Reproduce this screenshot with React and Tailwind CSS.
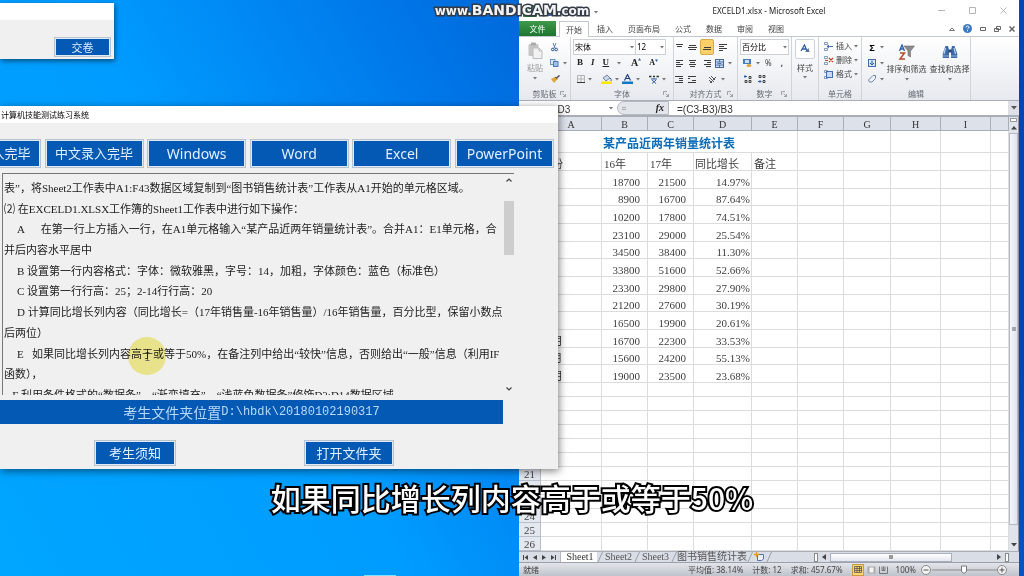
import React from "react";

const SANS = "font-['Noto_Sans','Noto_Sans_CJK_SC',sans-serif]";
const SERIF = "font-['Liberation_Serif','Noto_Sans_CJK_SC',serif]";

const ribbonTabs = ["插入", "页面布局", "公式", "数据", "审阅", "视图"];

const columns = ["A", "B", "C", "D", "E", "F", "G", "H", "I", ""];

const sales = [
  ["1月", "18700", "21500", "14.97%"],
  ["2月", "8900", "16700", "87.64%"],
  ["3月", "10200", "17800", "74.51%"],
  ["4月", "23100", "29000", "25.54%"],
  ["5月", "34500", "38400", "11.30%"],
  ["6月", "33800", "51600", "52.66%"],
  ["7月", "23300", "29800", "27.90%"],
  ["8月", "21200", "27600", "30.19%"],
  ["9月", "16500", "19900", "20.61%"],
  ["10月", "16700", "22300", "33.53%"],
  ["11月", "15600", "24200", "55.13%"],
  ["12月", "19000", "23500", "23.68%"],
];

const emptyRows = [15, 16, 17, 18, 19, 20, 21, 22, 23, 24, 25, 26];

const examLines = [
  { text: "表”，将Sheet2工作表中A1:F43数据区域复制到“图书销售统计表”工作表从A1开始的单元格区域。" },
  { text: "⑵ 在EXCELD1.XLSX工作簿的Sheet1工作表中进行如下操作：" },
  { text: "A      在第一行上方插入一行，在A1单元格输入“某产品近两年销量统计表”。合并A1：E1单元格，合", indent: true },
  { text: "并后内容水平居中" },
  { text: "B 设置第一行内容格式：字体：微软雅黑，字号：14，加粗，字体颜色：蓝色（标准色）", indent: true },
  { text: "C 设置第一行行高：25；2-14行行高：20", indent: true },
  { text: "D 计算同比增长列内容（同比增长=（17年销售量-16年销售量）/16年销售量，百分比型，保留小数点", indent: true },
  { text: "后两位）" },
  { text: "E   如果同比增长列内容高于或等于50%，在备注列中给出“较快”信息，否则给出“一般”信息（利用IF", indent: true },
  { text: "函数），" },
  { text: "   F 利用条件格式的“数据条”、“渐变填充”、“浅蓝色数据条”修饰D3:D14数据区域" },
];

/* ---------- small shared pieces ---------- */

function Caret() {
  return (
    <svg width="4" height="3" viewBox="0 0 4 3" className="shrink-0">
      <path d="M0 0h4L2 2.5z" fill="#777" />
    </svg>
  );
}

function Launcher() {
  return (
    <svg width="6" height="6" viewBox="0 0 6 6">
      <path d="M.5 4V.5H4M2.5 2.5l3 3M5.500 3v2.500H3" fill="none" stroke="#8a8f98" strokeWidth=".8" />
    </svg>
  );
}

function ToolButton({ label, children, className = "" }) {
  return (
    <button type="button" aria-label={label} className={`flex h-4 items-center gap-1 ${className}`}>
      {children}
    </button>
  );
}

function Lines({ rows, y = 1, gap = 2 }) {
  return (
    <svg width="9" height="9" viewBox="0 0 9 9">
      {rows.map(([x, w], i) => (
        <rect key={i} x={x} y={y + i * gap} width={w} height="1" fill="#3c3c3c" />
      ))}
    </svg>
  );
}

function Group({ label, launcher, width, children }) {
  return (
    <section className={`flex shrink-0 flex-col border-r border-[#d0d4da] pt-[2px] ${width}`}>
      <div className="flex-1">{children}</div>
      <div className="relative flex h-[13px] items-center justify-center text-[8px] leading-none text-[#666b73]">
        {label}
        {launcher && (
          <button type="button" aria-label={`${label}设置`} className="absolute right-1 top-1">
            <Launcher />
          </button>
        )}
      </div>
    </section>
  );
}

/* ---------- icons ---------- */

const PasteIcon = () => (
  <svg width="15" height="17" viewBox="0 0 15 17">
    <rect x=".5" y="2" width="10" height="12" rx="1" fill="#c6c6c6" />
    <rect x="3" y=".5" width="5" height="3" rx="1" fill="#a9a9a9" />
    <path d="M5 6h6l3 3v7.500H5z" fill="#f2f2f2" stroke="#bdbdbd" />
    <path d="M11 6v3h3" fill="none" stroke="#bdbdbd" />
  </svg>
);

const CutIcon = () => (
  <svg width="7" height="9" viewBox="0 0 7 9">
    <path d="M2 0l2 5M5 0L3 5" stroke="#5b7fae" fill="none" />
    <circle cx="1.800" cy="6.500" r="1.300" fill="none" stroke="#264f8f" />
    <circle cx="5.200" cy="6.500" r="1.300" fill="none" stroke="#264f8f" />
  </svg>
);

const CopyIcon = () => (
  <svg width="9" height="8" viewBox="0 0 9 8">
    <rect x=".5" y=".5" width="4.500" height="5" fill="#dbe8f7" stroke="#6a93c6" />
    <rect x="3.500" y="2.500" width="4.500" height="5" fill="#9cc0ea" stroke="#4b7ab5" />
  </svg>
);

const BrushIcon = () => (
  <svg width="10" height="8" viewBox="0 0 10 8">
    <path d="M9.500.5L6 3.500" stroke="#4d4d63" strokeWidth="1.500" />
    <path d="M1 4l4-2 2.500 2L4 8z" fill="#dda63a" />
    <path d="M5 2l2.500 2" stroke="#705020" />
  </svg>
);

const SortIcon = () => (
  <svg width="17" height="16" viewBox="0 0 17 16">
    <path d="M6 2h10.500l-4 5v6l-2.500-1.500V7z" fill="#8b8b8b" stroke="#6c6c6c" strokeWidth=".6" />
    <path d="M1.500 7L4 1l2.500 6M2.500 5h3" fill="none" stroke="#2f5fa8" strokeWidth="1.400" />
    <path d="M2 9h4.500L2 15h5" fill="none" stroke="#b8492f" strokeWidth="1.500" />
  </svg>
);

const BinocularsIcon = () => (
  <svg width="16" height="16" viewBox="0 0 16 16">
    <path d="M3.500 2h2.500l1 4v8H.8V9.500z" fill="#3e68a6" />
    <path d="M12.500 2H10L9 6v8h6.200V9.500z" fill="#3e68a6" />
    <rect x="6.500" y="5.500" width="3" height="3" fill="#24477f" />
    <path d="M3.500 4L2 10M12 4l1.500 6" stroke="#b6cff0" strokeWidth="1.200" />
    <path d="M.8 12h6.200M9 12h6.200" stroke="#8fb0dc" />
  </svg>
);

const CellIcon = ({ kind }) => (
  <svg width="10" height="9" viewBox="0 0 10 9">
    <path d="M.5.5h3v2h-3zM.5 6.500h3v2h-3z" fill="#fff" stroke="#69809f" strokeWidth=".8" />
    {kind === "insert" && <path d="M3 4.500h6M5 3L3 4.500 5 6" stroke="#3f6db0" fill="none" />}
    {kind === "delete" && <path d="M5 2l4 4M9 2L5 6M1 4.500h3" stroke="#c3402d" fill="none" strokeWidth="1.200" />}
    {kind === "format" && <rect x="2.500" y="1.500" width="6" height="6" fill="#c6daf2" stroke="#3f6db0" />}
  </svg>
);

/* ---------- Excel window ---------- */

function TitleBar() {
  return (
    <header className="relative flex h-[21px] items-center justify-center">
      <div className="absolute left-1 flex items-center gap-2">
        <svg width="14" height="12" viewBox="0 0 14 12">
          <rect width="14" height="12" rx="1" fill="#2b7a3d" />
          <path d="M4 3l5 6M9 3L4 9" stroke="#fff" strokeWidth="1.500" />
        </svg>
        <svg width="10" height="10" viewBox="0 0 10 10">
          <rect width="10" height="10" fill="#4d67b5" />
          <rect x="2" width="6" height="4" fill="#fff" />
        </svg>
      </div>
      <div className="absolute left-[75px] top-[11px]">
        <Caret />
      </div>
      <h1 className="text-[8px] text-[#222]">EXCELD1.xlsx - Microsoft Excel</h1>
      <div className="absolute right-3 flex items-center gap-6 text-[#b5b5b5]">
        <button type="button" aria-label="最小化">
          <svg width="7" height="7" viewBox="0 0 7 7"><path d="M0 3.500h7" stroke="currentColor" /></svg>
        </button>
        <button type="button" aria-label="最大化">
          <svg width="7" height="7" viewBox="0 0 7 7"><path d="M.5.5h6v6h-6z" fill="none" stroke="currentColor" /></svg>
        </button>
        <button type="button" aria-label="关闭">
          <svg width="7" height="7" viewBox="0 0 7 7"><path d="M.5.5l6 6M6.500.5l-6 6" stroke="currentColor" /></svg>
        </button>
      </div>
    </header>
  );
}

function RibbonTabs() {
  return (
    <nav className="flex h-4 items-stretch border-b border-[#c3c8cf] text-[8px] text-[#444]">
      <button type="button" className="w-[37px] bg-linear-to-b from-[#3f9a4b] to-[#1c7430] text-white">文件</button>
      <button type="button" className="-mb-px ml-[3px] w-[30px] border border-b-0 border-[#c3c8cf] bg-white">开始</button>
      <div className="flex gap-[15px] pl-2">
        {ribbonTabs.map((t) => (
          <button type="button" key={t}>{t}</button>
        ))}
      </div>
      <div className="ml-auto flex items-center gap-[8px] pr-1">
        <svg width="6" height="4" viewBox="0 0 6 4"><path d="M.5 3.500L3 1l2.500 2.500z" fill="none" stroke="#777" /></svg>
        <svg width="9" height="9" viewBox="0 0 9 9">
          <circle cx="4.500" cy="4.500" r="4.500" fill="#3b78c2" />
          <path d="M3 3.500q0-1.500 1.500-1.500T6 3.300Q6 4.200 4.500 4.800M4.500 6v1.200" fill="none" stroke="#fff" />
        </svg>
        <svg width="6" height="4" viewBox="0 0 6 4"><path d="M.5.5h5v3h-5z" fill="none" stroke="#666" /></svg>
        <svg width="7" height="6" viewBox="0 0 7 6"><path d="M2.500.5h4v3h-4zM.5 2.500h4v3h-4z" fill="none" stroke="#666" /></svg>
        <svg width="6" height="6" viewBox="0 0 6 6"><path d="M.5.5l5 5M5.500.5l-5 5" stroke="#666" strokeWidth="1.500" /></svg>
      </div>
    </nav>
  );
}

function Ribbon() {
  return (
    <div className="flex h-16 border-b border-[#a9aeb6] bg-linear-to-b from-white to-[#e6e9ee] text-[8px] text-[#444]">
      <Group label="剪贴板" launcher width="w-[52px]">
        <div className="flex pl-[7px]">
          <button type="button" className="flex w-[18px] flex-col items-center gap-1 pt-[3px] text-[#9a9a9a]">
            <PasteIcon />
            <span className="leading-[10px]">粘贴</span>
            <Caret />
          </button>
          <div className="ml-[6px] flex flex-col">
            <ToolButton label="剪切" className="pl-px"><CutIcon /></ToolButton>
            <ToolButton label="复制"><CopyIcon /><Caret /></ToolButton>
            <ToolButton label="格式刷"><BrushIcon /></ToolButton>
          </div>
        </div>
      </Group>

      <Group label="字体" launcher width="w-[103px]">
        <div className="flex h-4 px-[2px] text-[8px] text-black">
          <button type="button" className="flex w-[63px] items-center justify-between border border-[#cdd1d7] bg-white px-[1px]">
            宋体<Caret />
          </button>
          <button type="button" className="flex w-[30px] items-center justify-between border border-l-0 border-[#cdd1d7] bg-white px-[1px]">
            12<Caret />
          </button>
        </div>
        <div className="flex h-4 items-center gap-[8px] pl-[6px] font-['Liberation_Serif',serif] text-[9px] font-bold text-[#222]">
          <button type="button">B</button>
          <button type="button" className="italic">I</button>
          <button type="button" className="underline">U</button>
          <Caret />
          <button type="button" className="ml-[2px] flex text-[10px] leading-none">
            A<svg width="3" height="3" viewBox="0 0 3 3"><path d="M0 2.500L1.500 0 3 2.500z" fill="#2e5ea8" /></svg>
          </button>
          <button type="button" className="flex text-[8px] leading-none">
            A<svg width="3" height="3" viewBox="0 0 3 3"><path d="M0 .5h3L1.500 3z" fill="#2e5ea8" /></svg>
          </button>
        </div>
        <div className="flex h-4 items-center gap-[3px] pl-[6px]">
          <ToolButton label="边框">
            <svg width="8" height="8" viewBox="0 0 8 8"><path d="M.5.5h7v7M.5.5v7M4 .5v7M.5 4h7" fill="none" stroke="#b5b5b5" /><path d="M0 7.500h8" stroke="#333" /></svg>
          </ToolButton>
          <Caret />
          <ToolButton label="填充颜色" className="ml-[6px]">
            <svg width="11" height="10" viewBox="0 0 11 10"><path d="M2 4l4-3 3 3-4 3z" fill="#c7d9ef" stroke="#5c6f8d" strokeWidth=".8" /><path d="M9 4q2 1 1 3" fill="none" stroke="#2e5ea8" /><rect y="7.500" width="11" height="2.500" fill="#ffe600" /></svg>
          </ToolButton>
          <Caret />
          <ToolButton label="字体颜色">
            <svg width="11" height="10" viewBox="0 0 11 10"><path d="M2.500 6.500L5.500.5l3 6M3.500 4.500h4" fill="none" stroke="#27457c" strokeWidth="1.200" /><rect y="7.500" width="11" height="2.500" fill="#0b78c9" /></svg>
          </ToolButton>
          <Caret />
          <ToolButton label="拼音" className="ml-[6px]">
            <svg width="10" height="9" viewBox="0 0 10 9"><path d="M0 1.500h2.500M4 1.500h2M7.500 1.500H10" stroke="#333" strokeWidth="1.500" /><path d="M2 4h6M5 3v1M3 5l4 3.500M7 5L3 8.500" fill="none" stroke="#2e5ea8" /></svg>
          </ToolButton>
          <Caret />
        </div>
      </Group>

      <Group label="对齐方式" launcher width="w-[64px]">
        <div className="grid grid-cols-[10px_16px_14px_18px] justify-items-center">
          <ToolButton label="顶端对齐"><Lines rows={[[1, 7], [2, 5]]} /></ToolButton>
          <ToolButton label="垂直居中"><Lines rows={[[1, 7], [0, 9], [1, 7]]} y={2} /></ToolButton>
          <ToolButton label="底端对齐" className="w-[14px] justify-center rounded-xs border border-[#d6a94c] bg-[#fdd067]"><Lines rows={[[1, 7], [0, 8]]} y={4} /></ToolButton>
          <ToolButton label="自动换行"><Lines rows={[[0, 8], [0, 5], [0, 8], [0, 4]]} /></ToolButton>
          <ToolButton label="左对齐"><Lines rows={[[1, 7], [1, 4], [1, 7], [1, 5]]} /></ToolButton>
          <ToolButton label="居中"><Lines rows={[[1, 7], [2, 5], [1, 7], [2, 5]]} /></ToolButton>
          <ToolButton label="右对齐"><Lines rows={[[1, 7], [4, 4], [1, 7], [3, 5]]} /></ToolButton>
          <ToolButton label="合并后居中">
            <svg width="9" height="9" viewBox="0 0 9 9"><rect x=".5" y=".5" width="8" height="8" fill="#c9dcf3" stroke="#4b6a9c" /><path d="M.5 3h8M.5 6h8M4.500.5v2.500M4.500 6v3M2.500 4.500h4" stroke="#3a5c95" strokeWidth=".8" /></svg>
            <Caret />
          </ToolButton>
          <ToolButton label="减少缩进"><Lines rows={[[0, 8], [4, 4], [4, 4], [0, 8]]} /></ToolButton>
          <ToolButton label="增加缩进"><Lines rows={[[0, 8], [0, 2], [4, 4], [0, 8]]} /></ToolButton>
          <ToolButton label="方向" className="col-span-2">
            <svg width="9" height="9" viewBox="0 0 9 9"><path d="M1 2l5 5M3 1l4 4M1 5l3 3M8 2L2 8" stroke="#555" /></svg>
            <Caret />
          </ToolButton>
        </div>
      </Group>

      <Group label="数字" launcher width="w-[54px]">
        <div className="flex h-4 px-[2px]">
          <button type="button" className="flex flex-1 items-center justify-between border border-[#cdd1d7] bg-white px-[1px] text-black">
            百分比<Caret />
          </button>
        </div>
        <div className="flex h-4 items-center gap-[4px] pl-[5px]">
          <svg width="9" height="8" viewBox="0 0 9 8"><rect width="8" height="5" fill="#4a78b8" /><rect x="2" y="1" width="4" height="3" fill="#cfe0f5" /><ellipse cx="6" cy="6.500" rx="2.500" ry="1.500" fill="#e0a63a" /></svg>
          <Caret />
          <button type="button" className="pl-[1px]">%</button>
          <button type="button" className="pl-[5px] font-bold">,</button>
        </div>
        <div className="flex h-4 items-center gap-[6px] pl-[6px]">
          <svg width="8" height="8" viewBox="0 0 8 8"><path d="M0 1.500h3M1.500 0L0 1.500 1.500 3" stroke="#2e66b5" fill="none" /><path d="M5 1.500h2v2H5zM1 5.500h2v2H1zM5 5.500h2v2H5z" fill="none" stroke="#444" /></svg>
          <svg width="8" height="8" viewBox="0 0 8 8"><path d="M0 6.500h3M1.500 5L3 6.500 1.500 8" stroke="#2e66b5" fill="none" /><path d="M1 .5h2v2H1zM5 .5h2v2H5zM5 5.500h2v2H5z" fill="none" stroke="#444" /></svg>
        </div>
      </Group>

      <Group label="" width="w-[27px]">
        <button type="button" className="mx-auto flex flex-col items-center gap-[3px]">
          <span className="flex h-5 w-5 items-center justify-center rounded-xs border border-[#cfd3d9] bg-white">
            <svg width="10" height="10" viewBox="0 0 10 10"><path d="M1 7l3.500-6L7 7M2.500 5h3.500" stroke="#2e5ea8" strokeWidth="1.300" fill="none" /><path d="M5 8l3.500-4L9.500 8z" fill="#58739b" /></svg>
          </span>
          <span className="mt-[1px] leading-[10px]">样式</span>
          <Caret />
        </button>
      </Group>

      <Group label="单元格" width="w-[43px]">
        <div className="flex flex-col pl-[5px]">
          {[["insert", "插入"], ["delete", "删除"], ["format", "格式"]].map(([k, t]) => (
            <button type="button" key={k} className="flex h-[14px] items-center gap-[2px]">
              <CellIcon kind={k} />{t}<Caret />
            </button>
          ))}
        </div>
      </Group>

      <Group label="编辑" width="w-[109px]">
        <div className="flex pl-[6px]">
          <div className="flex flex-col">
            <ToolButton label="求和"><span className="w-[8px] text-[9px] font-bold leading-none text-black">Σ</span><Caret /></ToolButton>
            <ToolButton label="填充">
              <svg width="8" height="8" viewBox="0 0 8 8"><rect x=".5" y=".5" width="7" height="7" fill="#dce9f8" stroke="#3f6db0" /><path d="M4 1.500v4M2 4l2 2 2-2" stroke="#2258a8" fill="none" /></svg>
              <Caret />
            </ToolButton>
            <ToolButton label="清除">
              <svg width="8" height="8" viewBox="0 0 8 8"><path d="M.5 5L5 .5h2.500v3L4 7H1.500z" fill="#eef3fa" stroke="#7286a6" /></svg>
              <Caret />
            </ToolButton>
          </div>
          <button type="button" className="ml-[2px] flex w-[41px] flex-col items-center gap-1 whitespace-nowrap pt-[5px]">
            <SortIcon /><span className="leading-[10px]">排序和筛选</span><Caret />
          </button>
          <button type="button" className="ml-[2px] flex w-[41px] flex-col items-center gap-1 whitespace-nowrap pt-[5px]">
            <BinocularsIcon /><span className="leading-[10px]">查找和选择</span><Caret />
          </button>
        </div>
      </Group>
    </div>
  );
}

function FormulaBar() {
  return (
    <div className="flex h-4 items-stretch border-b-2 border-[#a9adb5] bg-white text-[10px]">
      <label className="flex w-[94px] items-center">
        <input aria-label="名称框" defaultValue="D3" className="h-full w-0 flex-1 bg-transparent pt-[3px] text-center font-['Liberation_Sans',sans-serif] text-[10px] leading-none text-[#333] outline-none" />
        <Caret />
      </label>
      <div className="ml-1 flex w-[52px] items-center justify-between rounded-l-full border border-[#b5bac2] bg-[#e2e5ea] px-1">
        <span className="h-[3px] w-1 border-y border-[#aaa]" />
        <span className="font-['Liberation_Serif',serif] text-[10px] font-bold italic leading-none text-[#222]">fx</span>
      </div>
      <input aria-label="编辑栏" defaultValue="=(C3-B3)/B3" className="min-w-0 flex-1 bg-transparent pl-2 pt-[3px] font-['Liberation_Sans',sans-serif] text-[10px] leading-none text-[#333] outline-none" />
      <button type="button" aria-label="展开编辑栏" className="flex w-[11px] items-center justify-center bg-[#dde0e6]">
        <svg width="6" height="4" viewBox="0 0 6 4"><path d="M0 0l3 3.500L6 0z" fill="#555" /></svg>
      </button>
    </div>
  );
}

const cell = "overflow-hidden whitespace-nowrap border-b border-r border-[#dcdcdc] p-0 align-bottom";

function RowHead({ n }) {
  return (
    <th scope="row" className="border-b border-r border-[#b9bec8] bg-[#e3e7ee] p-0 text-center align-bottom text-[11px] font-normal text-[#444]">
      {n}
    </th>
  );
}

function Blank({ count }) {
  return Array.from({ length: count }, (_, i) => <td key={i} className={cell} />);
}

function Sheet() {
  return (
    <div className="flex min-h-0 flex-1">
      <div className="min-w-0 flex-1 overflow-hidden">
        <table className={`w-full table-fixed border-separate border-spacing-0 bg-white text-[11px] leading-none text-[#3d3d3d] ${SERIF}`}>
          <colgroup>
            <col className="w-[22px]" />
            <col className="w-[61px]" />
            <col className="w-[46px]" />
            <col className="w-[46px]" />
            <col className="w-[58px]" />
            <col className="w-[46px]" />
            <col className="w-[46px]" />
            <col className="w-[47px]" />
            <col className="w-[50px]" />
            <col className="w-[50px]" />
            <col />
          </colgroup>
          <thead>
            <tr className="h-[14px]">
              <th className="border-b border-r border-[#a9aeb8] bg-[#dde1ea] p-0" />
              {columns.map((c, i) => (
                <th key={i} scope="col" className="border-b border-r border-[#a9aeb8] bg-[#dde1ea] p-0 text-center align-bottom text-[10px] font-normal text-[#333]">
                  {c}
                </th>
              ))}
            </tr>
          </thead>
          <tbody>
            <tr className="h-[22px]">
              <RowHead n={1} />
              <td colSpan={5} className={`${cell} pb-[2px] text-center text-[12px] font-bold text-[#0b6cb8]`}>某产品近两年销量统计表</td>
              <Blank count={5} />
            </tr>
            <tr className="h-[18px]">
              <RowHead n={2} />
              <td className={cell}>月份</td>
              <td className={`${cell} pl-[2px]`}>16年</td>
              <td className={`${cell} pl-[2px]`}>17年</td>
              <td className={`${cell} pl-[1px]`}>同比增长</td>
              <td className={`${cell} pl-[2px]`}>备注</td>
              <Blank count={5} />
            </tr>
            {sales.map((r, i) => (
              <tr key={r[0]} className={i % 3 === 1 ? "h-[17px]" : "h-[18px]"}>
                <RowHead n={i + 3} />
                <td className={cell}>{r[0]}</td>
                <td className={`${cell} pr-[7px] text-right`}>{r[1]}</td>
                <td className={`${cell} pr-[7px] text-right`}>{r[2]}</td>
                <td className={`${cell} pr-[1px] text-right`}>{r[3]}</td>
                <Blank count={6} />
              </tr>
            ))}
            {emptyRows.map((n) => (
              <tr key={n} className="h-[14px]">
                <RowHead n={n} />
                <Blank count={10} />
              </tr>
            ))}
          </tbody>
        </table>
      </div>
      <div className="flex w-[10px] flex-col border-r border-[#8f96a3] bg-[#dfe3ea]">
        <div className="mx-px mt-px h-1 border border-[#999] bg-white" />
        <div className="flex h-[11px] items-center justify-center">
          <svg width="6" height="4" viewBox="0 0 6 4"><path d="M0 3.500L3 0l3 3.500z" fill="#444" /></svg>
        </div>
        <div className="flex flex-1 items-center justify-center border border-[#b3b9c4] bg-linear-to-r from-[#f4f6fa] to-[#dfe4ed]">
          <span className="h-1 w-1 bg-[#a2a7b0]" />
        </div>
        <div className="flex h-[26px] items-end justify-center pb-1">
          <svg width="6" height="4" viewBox="0 0 6 4"><path d="M0 0l3 3.500L6 0z" fill="#444" /></svg>
        </div>
      </div>
    </div>
  );
}

function Slant() {
  return (
    <svg width="6" height="11" viewBox="0 0 6 11" className="shrink-0">
      <path d="M5.500 0L.5 11" stroke="#9aa0aa" fill="none" />
    </svg>
  );
}

function SheetTabs() {
  return (
    <div className={`flex h-[11px] items-stretch border-t border-[#a9aeb8] bg-[#d9dde6] text-[10px] leading-none text-[#555] ${SERIF}`}>
      <div className="flex w-[42px] items-center justify-around border-r border-[#b0b5be] px-[1px]">
        <svg width="5" height="5" viewBox="0 0 5 5"><path d="M0 0h1v5H0zM5 0v5L1.500 2.500z" fill="#444" /></svg>
        <svg width="4" height="5" viewBox="0 0 4 5"><path d="M4 0v5L0 2.500z" fill="#444" /></svg>
        <svg width="4" height="5" viewBox="0 0 4 5"><path d="M0 0v5l4-2.500z" fill="#444" /></svg>
        <svg width="5" height="5" viewBox="0 0 5 5"><path d="M4 0h1v5H4zM0 0v5l3.500-2.500z" fill="#444" /></svg>
      </div>
      <button type="button" className="w-[36px] bg-white pl-[2px] text-[#333]">Sheet1</button>
      <Slant />
      <button type="button" className="w-[31px]">Sheet2</button>
      <Slant />
      <button type="button" className="w-[31px]">Sheet3</button>
      <Slant />
      <button type="button" className="whitespace-nowrap">图书销售统计表</button>
      <Slant />
      <svg width="11" height="9" viewBox="0 0 11 9" className="mx-px">
        <path d="M3.500 2.500h6v4.500l-2 1.500h-4z" fill="#e9f0fa" stroke="#5675a8" />
        <path d="M2.500 0v5M0 2.500h5" stroke="#e09a28" strokeWidth="1.300" />
      </svg>
      <Slant />
      <div className="ml-auto flex w-[205px] items-center gap-[4px]">
        <span className="h-[9px] w-1 border border-[#888] bg-white" />
        <svg width="4" height="6" viewBox="0 0 4 6"><path d="M4 0v6L0 3z" fill="#444" /></svg>
        <div className="flex h-[9px] w-[122px] items-center justify-center border border-[#a9b0bc] bg-linear-to-b from-white to-[#e2e6ee]">
          <span className="h-1 w-1 bg-[#999]" />
        </div>
        <svg width="4" height="6" viewBox="0 0 4 6" className="ml-auto"><path d="M0 0v6l4-3z" fill="#444" /></svg>
        <span className="mr-[10px] h-[9px] w-1 border border-[#888] bg-white" />
      </div>
    </div>
  );
}

function StatusBar() {
  return (
    <footer className="flex h-[14px] items-center border-t border-[#9ba1ab] bg-linear-to-b from-[#e2e5ea] to-[#bfc4cc] pl-1 text-[8px] leading-none text-[#444]">
      <span>就绪</span>
      <div className="ml-auto flex items-center gap-[9px] pr-[9px]">
        <span>平均值: 38.14%</span>
        <span>计数: 12</span>
        <span>求和: 457.67%</span>
      </div>
      <div className="flex items-center gap-[3px]">
        <button type="button" aria-label="普通" className="flex h-3 w-3 items-center justify-center border border-[#c99a3a] bg-[#fbd775]">
          <svg width="8" height="7" viewBox="0 0 8 7"><path d="M.5.5h7v6h-7zM.5 2.500h7M.5 4.500h7M3 .5v6M5.500.5v6" fill="none" stroke="#555" strokeWidth=".8" /></svg>
        </button>
        <svg width="9" height="8" viewBox="0 0 9 8"><path d="M.5.5h8v7h-8z" fill="#aaa" /><path d="M2.500 1.500h4v5h-4z" fill="#f5f5f5" /></svg>
        <svg width="9" height="8" viewBox="0 0 9 8"><path d="M.5.5v7h8v-7M3 .5v4h3v-4M4.500.5V4" fill="none" stroke="#777" /></svg>
      </div>
      <span className="ml-[8px]">100%</span>
      <div className="ml-[4px] mr-[11px] flex items-center">
        <svg width="88" height="12" viewBox="0 0 88 12">
          <path d="M12 6h66" stroke="#8b8b8b" />
          <circle cx="6" cy="6" r="4.500" fill="#f4f4f4" stroke="#888" />
          <path d="M3.500 6h5" stroke="#555" />
          <circle cx="82" cy="6" r="4.500" fill="#f4f4f4" stroke="#888" />
          <path d="M79.500 6h5M82 3.500v5" stroke="#555" />
          <path d="M41.500 2h5v5.500L44 9.500l-2.500-2z" fill="#fff" stroke="#777" />
        </svg>
      </div>
    </footer>
  );
}

function ExcelWindow() {
  return (
    <main className={`absolute inset-y-0 left-[519px] right-[5px] flex flex-col overflow-hidden bg-white ${SANS}`}>
      <TitleBar />
      <RibbonTabs />
      <Ribbon />
      <FormulaBar />
      <Sheet />
      <SheetTabs />
      <StatusBar />
    </main>
  );
}

/* ---------- exam windows ---------- */

function BlueButton({ children, className = "" }) {
  return (
    <button
      type="button"
      className={`shrink-0 whitespace-nowrap border-2 border-[#b9c3cf] bg-[#0459b5] text-[#e3f1ff] outline-1 -outline-offset-2 outline-[#dfeaf5] ${className}`}
    >
      {children}
    </button>
  );
}

function SubmitWindow() {
  return (
    <section className={`absolute left-0 top-[3px] w-[114px] bg-[#f0f0f0] shadow-[1px_2px_5px_rgba(0,0,0,0.5)] ${SANS}`}>
      <div className="h-[17px] bg-white" />
      <div className="flex justify-end px-[3px] pb-[2px] pt-[17px]">
        <BlueButton className="h-5 w-[57px] text-[11px] leading-none">交卷</BlueButton>
      </div>
    </section>
  );
}

function ExamWindow() {
  return (
    <section className={`absolute left-0 top-[106px] w-[558px] overflow-hidden bg-[#f0f0f0] shadow-[1px_2px_8px_rgba(0,0,0,0.5)] ${SANS}`}>
      <h2 className="flex h-[17px] items-center bg-white pl-[1px] text-[8px] text-black">计算机技能测试练习系统</h2>
      <div className="-ml-[58px] flex justify-between pr-1 pt-4 text-[14px]">
        {["英文录入完毕", "中文录入完毕"].map((t) => (
          <BlueButton key={t} className="h-[29px] w-[99px] text-[13px]">{t}</BlueButton>
        ))}
        {["Windows", "Word", "Excel", "PowerPoint"].map((t) => (
          <BlueButton key={t} className="h-[29px] w-[99px]">{t}</BlueButton>
        ))}
      </div>

      <div className="ml-[2px] mr-11 mt-[5px] flex h-[222px] border-l border-t border-[#777] text-[#1c1c1c]">
        <div className={`min-w-0 flex-1 overflow-hidden pl-px pt-1 text-[11px] leading-5 ${SERIF}`}>
          <div className="flex h-[227px] flex-col justify-between">
            {examLines.map((l) => (
              <p key={l.text} className={`whitespace-pre ${l.indent ? "pl-[13px]" : ""}`}>{l.text}</p>
            ))}
          </div>
        </div>
        <div className="flex w-[10px] flex-col bg-[#f0f0f0]">
          <div className="flex h-3 items-center justify-center">
            <svg width="6" height="4" viewBox="0 0 6 4"><path d="M.5 3.500L3 1l2.500 2.500" fill="none" stroke="#444" strokeWidth="1.200" /></svg>
          </div>
          <div className="mt-[15px] h-[54px] bg-[#cdcdcd]" />
          <div className="mt-auto flex h-3 items-center justify-center">
            <svg width="6" height="4" viewBox="0 0 6 4"><path d="M.5.5L3 3 5.500.5" fill="none" stroke="#444" strokeWidth="1.200" /></svg>
          </div>
        </div>
      </div>

      <div className="mr-[55px] mt-[5px] flex h-[24px] items-center justify-center bg-[#0459b5] text-[14px] text-[#b8d9fa]">
        <span>考生文件夹位置</span>
        <span className="font-['Liberation_Mono',monospace] text-[12px]">D:\hbdk\20180102190317</span>
      </div>

      <div className="flex justify-between pb-[3px] pl-[94px] pr-[164px] pt-4 text-[13px] leading-none">
        <BlueButton className="h-[26px] w-[82px]">考生须知</BlueButton>
        <BlueButton className="h-[26px] w-[90px]">打开文件夹</BlueButton>
      </div>
    </section>
  );
}

export default function App() {
  return (
    <div className="relative h-screen w-full overflow-hidden bg-[linear-gradient(60deg,#00a6ff_0%,#009cff_30%,#0078ea_52%,#0046b4_85%)]">
      <ExcelWindow />
      <SubmitWindow />
      <ExamWindow />

      {/* pointer highlight */}
      <div className="absolute left-[128px] top-[337px] flex h-[38px] w-[38px] items-center justify-center rounded-full bg-[#f7f193] mix-blend-multiply">
        <svg width="5" height="9" viewBox="0 0 5 9"><path d="M.5.5h4M2.500.5v8M.5 8.500h4" stroke="#777" fill="none" /></svg>
      </div>

      {/* recorder watermark */}
      <p className="absolute inset-x-0 top-0 flex h-[21px] items-center justify-center font-['DejaVu_Sans',sans-serif] text-[12px] font-bold text-[#f4f4f4] [-webkit-text-stroke:3px_#333b46] [paint-order:stroke_fill]">
        www.<span className="text-[14px]">BANDICAM</span>.com
      </p>

      {/* caption */}
      <p className="absolute inset-x-0 top-[476px] text-center font-['Noto_Sans_CJK_SC',sans-serif] text-[30px] font-medium leading-[42px] text-white [-webkit-text-stroke:4px_#000] [paint-order:stroke_fill]">
        如果同比增长列内容高于或等于50%
      </p>

      <div className="absolute bottom-0 left-[364px] h-px w-8 bg-[#7fe0ff]" />
    </div>
  );
}
